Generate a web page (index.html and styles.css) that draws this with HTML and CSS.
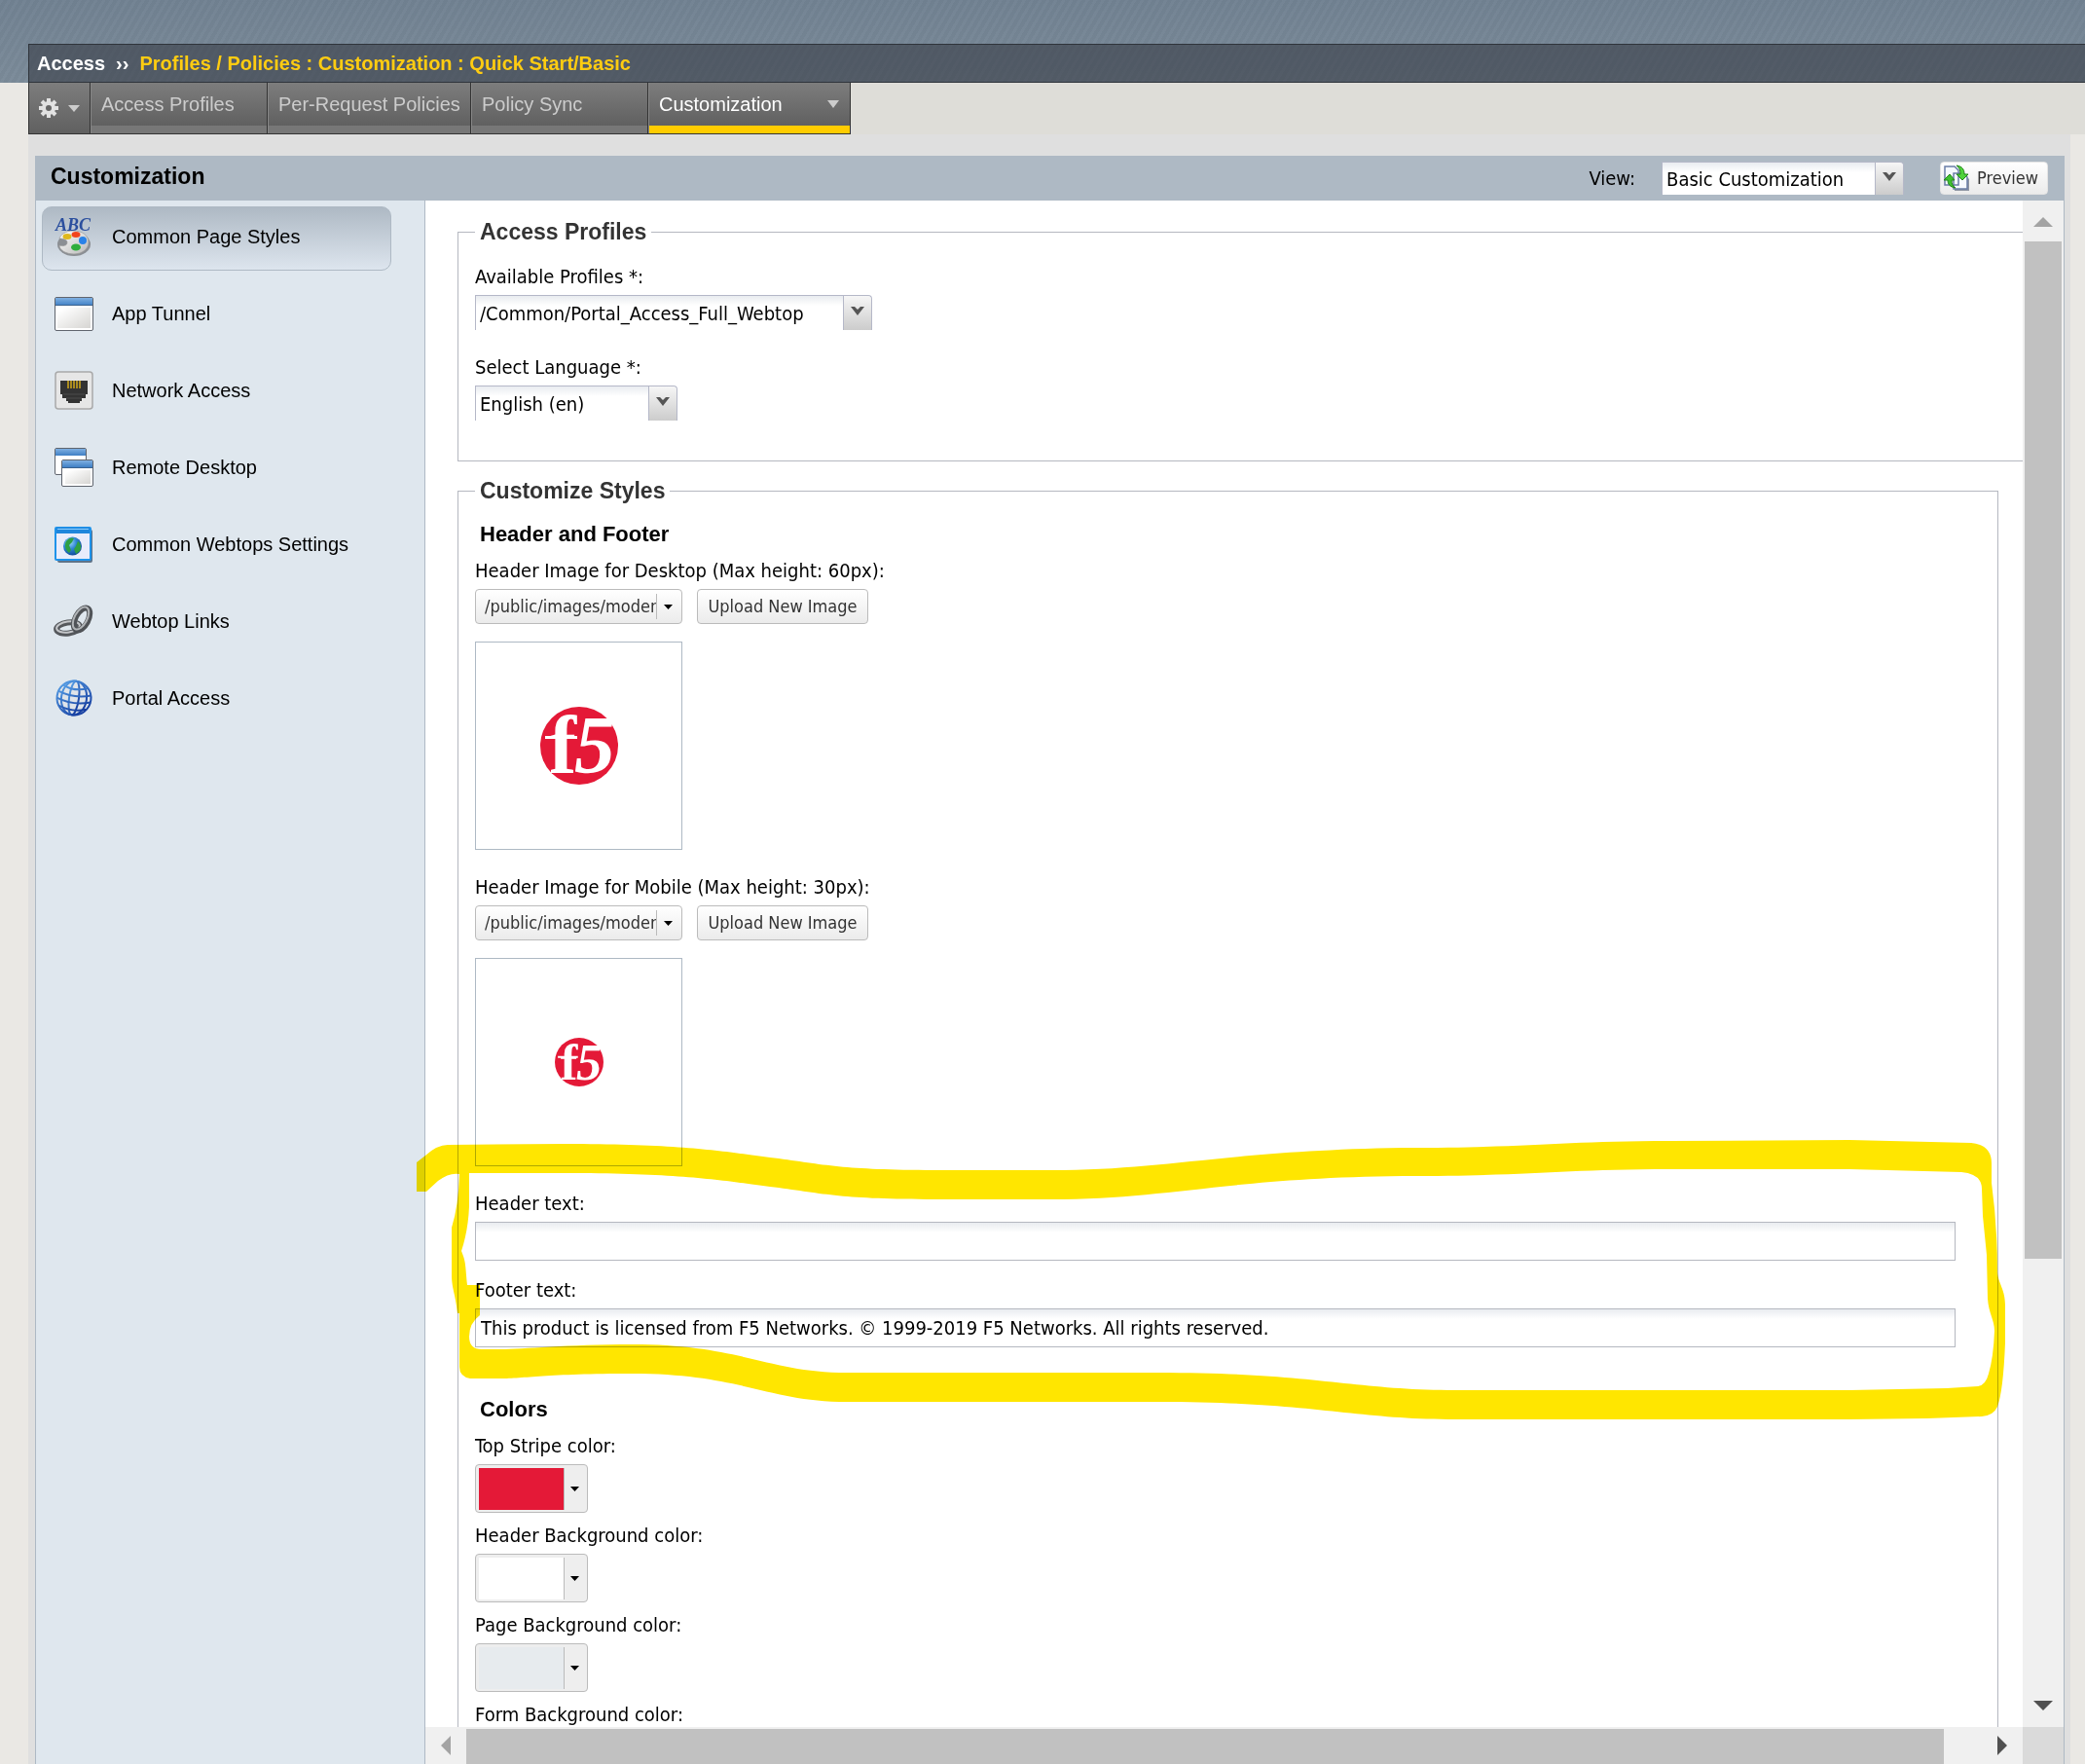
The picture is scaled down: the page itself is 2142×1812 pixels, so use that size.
FILE: index.html
```html
<!DOCTYPE html>
<html lang="en">
<head>
    <meta charset="UTF-8">
    <meta name="viewport" content="width=device-width, initial-scale=1.0">
    <title>Access - Customization</title>
    <link rel="stylesheet" href="styles.css">
</head>
<body>
    <header class="banner">
        <div class="breadcrumb">
            <span>Access</span>
            <span>&rsaquo;&rsaquo;</span>
            <span class="current">Profiles / Policies : Customization : Quick Start/Basic</span>
        </div>
    </header>

    <div class="page">
        <nav class="tabs">
            <button class="gear" type="button" aria-label="Options">
                <svg width="22" height="24" viewBox="0 0 22 24">
                    <g stroke="#e2e2e2" stroke-width="4">
                        <path d="M11 2v20M1 12h20M4 5l14 14M18 5L4 19"/>
                    </g>
                    <circle cx="11" cy="12" r="7" fill="#e2e2e2"/>
                    <circle cx="11" cy="12" r="3" fill="#666"/>
                </svg>
                <svg width="12" height="7" viewBox="0 0 12 7"><path d="M0 0h12L6 7z" fill="#ccc"/></svg>
            </button>
            <a class="tab" href="#">Access Profiles</a>
            <a class="tab wide" href="#">Per-Request Policies</a>
            <a class="tab" href="#">Policy Sync</a>
            <a class="tab wide active" href="#">Customization
                <svg width="12" height="8" viewBox="0 0 12 8"><path d="M0 0h12L6 8z" fill="#ccc"/></svg>
            </a>
        </nav>

        <div class="frame">
            <main class="panel">
                <div class="panel-header">
                    <h1>Customization</h1>
                    <label for="view">View:</label>
                    <span class="combo view">
                        <select id="view"><option>Basic Customization</option></select>
                        <span class="trigger"><svg width="16" height="10" viewBox="0 0 16 10"><path d="M1 0h4l3 3 3-3h4L8 9z" fill="#555"/></svg></span>
                    </span>
                    <button class="preview" type="button">
                        <svg width="28" height="28" viewBox="0 0 28 28">
                            <path d="M12 10h10l5 5v12H12z" fill="#8f96a3"/>
                            <path d="M2 2h10l4 4v15H2zM11 9h10l4 4v12H11z" fill="#f5f9ff" stroke="#6a7da6" stroke-width="1.5"/>
                            <path d="M7 10l5 6H9c0 4 1 6 4 8-6-1-8-4-8-8H1z" fill="#3fc12f" stroke="#23851a"/>
                            <path d="M14 1c6 1 8 4 8 9h4l-6 6-6-6h4c0-4-1-7-4-9z" fill="#4fd33c" stroke="#23851a"/>
                        </svg>
                        Preview
                    </button>
                </div>

                <div class="panel-body">
                    <nav class="sidebar">
                        <a class="item selected" href="#">
                            <svg width="40" height="40" viewBox="0 0 40 40">
                                <defs>
                                    <linearGradient id="palette" x1="0" y1="0" x2="1" y2="1">
                                        <stop offset="0" stop-color="#fff"/>
                                        <stop offset="1" stop-color="#b9b9b9"/>
                                    </linearGradient>
                                </defs>
                                <ellipse cx="20" cy="28" rx="17" ry="12" fill="#8b8f94"/>
                                <path d="M19 14c10 0 16 5 16 12s-7 12-15 12S5 34 5 29c3 1 8 1 8-3 0-3-4-4-8-4 1-4 7-8 14-8z" fill="url(#palette)" stroke="#999" stroke-width=".7"/>
                                <ellipse cx="13" cy="20" rx="4.500" ry="3" fill="#dfb81c"/>
                                <ellipse cx="22" cy="18" rx="4.500" ry="3" fill="#f2441c"/>
                                <ellipse cx="29" cy="24" rx="4" ry="4" fill="#2a82e8"/>
                                <ellipse cx="22" cy="31" rx="5" ry="3.500" fill="#2fae3c"/>
                                <text x="19" y="14" class="abc">ABC</text>
                            </svg>
                            Common Page Styles
                        </a>
                        <a class="item" href="#">
                            <svg width="40" height="40" viewBox="0 0 40 40">
                                <defs>
                                    <linearGradient id="bar" x1="0" y1="0" x2="0" y2="1">
                                        <stop offset="0" stop-color="#7fb0e2"/>
                                        <stop offset="1" stop-color="#3f7fc4"/>
                                    </linearGradient>
                                    <linearGradient id="pane" x1="0" y1="0" x2="1" y2="1">
                                        <stop offset=".1" stop-color="#fff"/>
                                        <stop offset="1" stop-color="#d6d5d2"/>
                                    </linearGradient>
                                </defs>
                                <rect x=".5" y="3.500" width="39" height="34" rx="1.500" fill="#fff" stroke="#60656e"/>
                                <rect x="1" y="4" width="38" height="8" fill="url(#bar)"/>
                                <path d="M1 11.500h38" stroke="#3a628f"/>
                                <rect x="3" y="14" width="34" height="21" fill="url(#pane)"/>
                            </svg>
                            App Tunnel
                        </a>
                        <a class="item" href="#">
                            <svg width="40" height="40" viewBox="0 0 40 40">
                                <rect x="1" y="1" width="38" height="38" rx="3" fill="#e6e6e6" stroke="#a9a9a9" stroke-width="1.500"/>
                                <path d="M6 10h28v14h-2v4h-4v3h-2v2H14v-2h-2v-3H8v-4H6z" fill="#333"/>
                                <path d="M9 24h22M12 28h16" stroke="#4c4c4c" stroke-width="1"/>
                                <path d="M14 10v8M17 10v8M20 10v8M23 10v8M26 10v8" stroke="#c9a21c" stroke-width="1.600"/>
                            </svg>
                            Network Access
                        </a>
                        <a class="item" href="#">
                            <svg width="40" height="40" viewBox="0 0 40 40">
                                <rect x=".5" y=".5" width="32" height="27" rx="1.500" fill="#fff" stroke="#60656e"/>
                                <rect x="1" y="1" width="31" height="7" fill="url(#bar)"/>
                                <rect x="7.500" y="12.500" width="32" height="27" rx="1.500" fill="#fff" stroke="#60656e"/>
                                <rect x="8" y="13" width="31" height="7" fill="url(#bar)"/>
                                <path d="M8 20.500h31" stroke="#3a628f"/>
                                <rect x="11" y="23" width="26" height="14" fill="url(#pane)"/>
                            </svg>
                            Remote Desktop
                        </a>
                        <a class="item" href="#">
                            <svg width="40" height="40" viewBox="0 0 40 40">
                                <defs>
                                    <radialGradient id="earth" cx=".35" cy=".3" r=".8">
                                        <stop offset="0" stop-color="#9fdcff"/>
                                        <stop offset=".45" stop-color="#2f86d2"/>
                                        <stop offset="1" stop-color="#0a3f8f"/>
                                    </radialGradient>
                                </defs>
                                <rect x="3" y="5" width="36" height="34" rx="2" fill="#5f7388"/>
                                <rect x="1" y="3" width="36" height="33" rx="1" fill="#e9ecfb" stroke="#1f93ea" stroke-width="2"/>
                                <rect x="2" y="3" width="34" height="6" fill="#1f86dc"/>
                                <path d="M3 4.500h32" stroke="#8cd0ff"/>
                                <circle cx="18.500" cy="22" r="9.500" fill="url(#earth)"/>
                                <path d="M12 17c3-4 6-4 8-3l-2 4-3 3 2 5-2 3c-4-3-5-8-3-12zM24 17c3 2 4 6 2 10l-4 3-2-5 2-3z" fill="#2fa044"/>
                            </svg>
                            Common Webtops Settings
                        </a>
                        <a class="item" href="#">
                            <svg width="40" height="40" viewBox="0 0 40 40">
                                <g fill="none">
                                    <ellipse cx="14" cy="27" rx="12" ry="5.500" transform="rotate(-8 14 27)" stroke="#55585c" stroke-width="6"/>
                                    <ellipse cx="14" cy="26" rx="12" ry="5.500" transform="rotate(-8 14 26)" stroke="#c4c6c9" stroke-width="2"/>
                                    <ellipse cx="28" cy="18" rx="6.500" ry="12.500" transform="rotate(28 28 18)" stroke="#505357" stroke-width="6"/>
                                    <ellipse cx="27" cy="17" rx="6.500" ry="12.500" transform="rotate(28 27 17)" stroke="#b2b5b8" stroke-width="2"/>
                                </g>
                            </svg>
                            Webtop Links
                        </a>
                        <a class="item" href="#">
                            <svg width="40" height="40" viewBox="0 0 40 40">
                                <defs>
                                    <linearGradient id="wire" x1="0" y1="0" x2="1" y2="1">
                                        <stop offset="0" stop-color="#5aa5ea"/>
                                        <stop offset="1" stop-color="#0b2f96"/>
                                    </linearGradient>
                                </defs>
                                <circle cx="20" cy="20" r="18" fill="#dfe4ea"/>
                                <g fill="none" stroke="url(#wire)" stroke-width="2" transform="rotate(8 20 20)">
                                    <circle cx="20" cy="20" r="17.500"/>
                                    <ellipse cx="20" cy="20" rx="13" ry="17.500"/>
                                    <ellipse cx="20" cy="20" rx="5" ry="17.500"/>
                                    <path d="M7 8q13 6 26 0M3 15q17 6 34 0M2.500 22q17 6 35 0M6 30q14 5 28 0"/>
                                </g>
                            </svg>
                            Portal Access
                        </a>
                    </nav>

                    <div class="content">
                        <fieldset class="profiles">
                            <legend>Access Profiles</legend>
                            <div class="field">
                                <label for="profile">Available Profiles *:</label>
                                <span class="combo profile">
                                    <select id="profile"><option>/Common/Portal_Access_Full_Webtop</option></select>
                                    <span class="trigger"><svg width="16" height="10" viewBox="0 0 16 10"><path d="M1 0h4l3 3 3-3h4L8 9z" fill="#555"/></svg></span>
                                </span>
                            </div>
                            <div class="field">
                                <label for="language">Select Language *:</label>
                                <span class="combo language">
                                    <select id="language"><option>English (en)</option></select>
                                    <span class="trigger"><svg width="16" height="10" viewBox="0 0 16 10"><path d="M1 0h4l3 3 3-3h4L8 9z" fill="#555"/></svg></span>
                                </span>
                            </div>
                        </fieldset>

                        <fieldset class="styles">
                            <legend>Customize Styles</legend>

                            <h2>Header and Footer</h2>
                            <div class="field">
                                <label for="desktop-image">Header Image for Desktop (Max height: 60px):</label>
                                <div class="row">
                                    <span class="picker">
                                        <select id="desktop-image"><option>/public/images/modern</option></select>
                                        <svg width="9" height="5" viewBox="0 0 9 5"><path d="M0 0h9L4.500 5z"/></svg>
                                    </span>
                                    <button class="upload" type="button">Upload New Image</button>
                                </div>
                                <div class="thumb">
                                    <svg width="80" height="80" viewBox="0 0 80 80">
                                        <circle cx="40" cy="40" r="40" fill="#e41937"/>
                                        <g class="logo">
                                            <text x="9" y="68">f</text>
                                            <text x="35" y="68" class="slant">5</text>
                                            <path d="M5 30h33v3H5zM11 65h23v3H11z"/>
                                        </g>
                                    </svg>
                                </div>
                            </div>
                            <div class="field">
                                <label for="mobile-image">Header Image for Mobile (Max height: 30px):</label>
                                <div class="row">
                                    <span class="picker">
                                        <select id="mobile-image"><option>/public/images/modern</option></select>
                                        <svg width="9" height="5" viewBox="0 0 9 5"><path d="M0 0h9L4.500 5z"/></svg>
                                    </span>
                                    <button class="upload" type="button">Upload New Image</button>
                                </div>
                                <div class="thumb">
                                    <svg width="50" height="50" viewBox="0 0 80 80">
                                        <circle cx="40" cy="40" r="40" fill="#e41937"/>
                                        <g class="logo">
                                            <text x="9" y="68">f</text>
                                            <text x="35" y="68" class="slant">5</text>
                                            <path d="M5 30h33v3H5zM11 65h23v3H11z"/>
                                        </g>
                                    </svg>
                                </div>
                            </div>
                            <div class="field text">
                                <label for="header-text">Header text:</label>
                                <input id="header-text" type="text">
                            </div>
                            <div class="field text">
                                <label for="footer-text">Footer text:</label>
                                <input id="footer-text" type="text" value="This product is licensed from F5 Networks. © 1999-2019 F5 Networks. All rights reserved.">
                            </div>

                            <h2 class="colors">Colors</h2>
                            <div class="field color">
                                <label for="top-stripe">Top Stripe color:</label>
                                <button id="top-stripe" class="swatch" type="button">
                                    <span class="red"></span>
                                    <svg width="9" height="5" viewBox="0 0 9 5"><path d="M0 0h9L4.500 5z"/></svg>
                                </button>
                            </div>
                            <div class="field color">
                                <label for="header-bg">Header Background color:</label>
                                <button id="header-bg" class="swatch" type="button">
                                    <span class="white"></span>
                                    <svg width="9" height="5" viewBox="0 0 9 5"><path d="M0 0h9L4.500 5z"/></svg>
                                </button>
                            </div>
                            <div class="field color">
                                <label for="page-bg">Page Background color:</label>
                                <button id="page-bg" class="swatch" type="button">
                                    <span class="gray"></span>
                                    <svg width="9" height="5" viewBox="0 0 9 5"><path d="M0 0h9L4.500 5z"/></svg>
                                </button>
                            </div>
                            <div class="field color">
                                <label for="form-bg">Form Background color:</label>
                                <button id="form-bg" class="swatch" type="button">
                                    <span class="white"></span>
                                    <svg width="9" height="5" viewBox="0 0 9 5"><path d="M0 0h9L4.500 5z"/></svg>
                                </button>
                            </div>
                        </fieldset>
                    </div>

                    <div class="vscroll">
                        <svg width="20" height="10" viewBox="0 0 20 10"><path d="M10 0l10 10H0z" fill="#a3a3a3"/></svg>
                        <div class="track"><div class="handle"></div></div>
                        <svg width="20" height="10" viewBox="0 0 20 10"><path d="M0 0h20L10 10z" fill="#505050"/></svg>
                    </div>
                    <div class="hscroll">
                        <svg width="10" height="20" viewBox="0 0 10 20"><path d="M10 0v20L0 10z" fill="#a3a3a3"/></svg>
                        <div class="track"><div class="handle"></div></div>
                        <svg width="10" height="20" viewBox="0 0 10 20"><path d="M0 0v20l10-10z" fill="#505050"/></svg>
                    </div>
                    <div class="corner"></div>

                    <!-- marker stroke around the header and footer text fields -->
                    <svg class="marker" viewBox="428 1170 1634 292" preserveAspectRatio="none">
                        <path fill="#ffe600" fill-rule="evenodd" d="
                            M428 1195L437 1188Q449 1177 460 1177L580 1176C720 1176 760 1187 800 1191C850 1198 870 1203 970 1203
                            L1079 1203C1200 1203 1260 1183 1441 1180C1580 1180 1600 1173 1716 1173L1900 1172L2025 1175
                            Q2046 1177 2046 1196L2046 1216Q2052 1260 2052 1308C2053 1320 2060 1325 2060 1342L2060 1380
                            Q2058 1430 2052 1446Q2048 1455 2036 1456L1980 1458L1900 1459L1496 1459C1390 1459 1350 1441 1189 1441
                            L870 1441C790 1441 760 1412 650 1412C560 1412 540 1417 513 1417L483 1417Q472 1415 472 1405L472 1350L470 1350
                            C468 1330 464 1325 464 1310L464 1262Q471 1240 472 1207Q462 1205 450 1214L438 1225L428 1225Z
                            M482 1206L580 1206C720 1206 760 1217 800 1221C850 1228 870 1233 970 1233L1079 1233
                            C1200 1233 1260 1211 1441 1209C1580 1209 1600 1202 1716 1202L1900 1202L2015 1205Q2036 1207 2036 1222
                            L2037 1250L2041 1290L2042 1335C2043 1350 2049 1357 2049 1368Q2048 1395 2043 1412Q2040 1424 2032 1425
                            L2000 1427L1900 1429L1496 1429C1390 1429 1350 1411 1189 1411L870 1411C790 1411 760 1382 650 1382
                            C580 1382 540 1387 513 1387L495 1387Q482 1387 482 1374Q482 1360 493 1352L493 1321L480 1321
                            C478 1302 479 1298 474 1286Q481 1265 482 1240Z"/>
                    </svg>
                </div>
            </main>
        </div>
    </div>
</body>
</html>
```
FILE: styles.css
```css
* {
    box-sizing: border-box;
}
body {
    margin: 0;
    height: 100vh;
    display: flex;
    flex-direction: column;
    overflow: hidden;
    background-color: #eae8e4;
    color: #000;
    font-family: "DejaVu Sans Condensed", "DejaVu Sans", sans-serif;
    font-size: 20px;
    line-height: 24px;
}
svg {
    display: block;
    flex: none;
    overflow: visible;
}
button, select, input {
    margin: 0;
    font: inherit;
    color: inherit;
}
select {
    appearance: none;
    border: none;
    outline: none;
    background: none;
}

/* top banner */
.banner {
    padding: 45px 0 0 29px;
    background: repeating-linear-gradient(120deg, rgba(255, 255, 255, .02) 0 3px, rgba(0, 0, 0, .02) 3px 7px),
        linear-gradient(#718292, #7b8b99);
}
.breadcrumb {
    display: flex;
    align-items: center;
    gap: 11px;
    height: 40px;
    padding-left: 8px;
    border: 1px solid #2f343b;
    border-right: none;
    background-color: rgba(50, 52, 62, .55);
    color: #fff;
    font: bold 20px/24px "Liberation Sans", Arial, sans-serif;
}
.breadcrumb .current {
    color: #fc1;
}
.page {
    flex: 1;
    min-height: 0;
    display: flex;
    flex-direction: column;
    padding-left: 29px;
}

/* tabs */
.tabs {
    display: flex;
    height: 53px;
    background-color: #deddd8;
    font: 20px/24px "Liberation Sans", Arial, sans-serif;
}
.gear, .tab {
    border: solid #333;
    border-width: 0 0 1px 1px;
    background: linear-gradient(#7d7d7d, #606060);
}
.gear {
    width: 63px;
    display: flex;
    align-items: center;
    gap: 9px;
    padding: 0 9px;
}
.tab {
    display: flex;
    justify-content: space-between;
    align-items: center;
    width: 182px;
    padding: 0 11px 8px;
    box-shadow: inset 1px 0 #888;
    color: #ccc;
    text-decoration: none;
    white-space: nowrap;
    background: linear-gradient(#7d7d7d, #606060 44px, #777 44px);
}
.tab.wide {
    width: 209px;
}
.tab.active {
    border-right: 1px solid #333;
    background: linear-gradient(#7d7d7d, #606060 44px, #fc0 44px);
    color: #fff;
}

/* panel */
.frame {
    flex: 1;
    min-height: 0;
    display: flex;
    margin-right: 15px;
    padding: 22px 6px 0 7px;
    background-color: #dfdfdf;
}
.panel {
    flex: 1;
    min-width: 0;
    display: flex;
    flex-direction: column;
    border: solid #aeb9c4;
    border-width: 0 1px;
}
.panel-header {
    display: flex;
    align-items: center;
    height: 46px;
    padding: 0 16px 0 15px;
    background-color: #aeb9c4;
}
h1 {
    flex: 1;
    margin: 0;
    padding-bottom: 4px;
    font: bold 23px/24px "Liberation Sans", Arial, sans-serif;
}
.combo {
    display: flex;
    height: 36px;
    border: 1px solid #b5b8c8;
    border-bottom: none;
    border-top-right-radius: 4px;
    background: linear-gradient(#e9ecf0, #fff 10px);
}
.combo select {
    flex: 1;
    min-width: 0;
    padding: 0 4px;
}
.trigger {
    width: 29px;
    display: flex;
    align-items: center;
    justify-content: center;
    padding-bottom: 3px;
    border-left: 1px solid #b5b8c8;
    border-top-right-radius: 4px;
    background: linear-gradient(#f6f6f6, #ccc);
}
.combo.view {
    width: 249px;
    height: 34px;
    margin: 0 37px 0 27px;
}
.combo.profile {
    width: 408px;
}
.combo.language {
    width: 208px;
}
.preview, .upload, .picker {
    border: 1px solid #bbb;
    border-radius: 4px;
    background: linear-gradient(#fff, #ebebeb);
    color: #333;
    font-size: 18px;
}
.preview {
    display: flex;
    align-items: center;
    gap: 7px;
    height: 34px;
    padding: 0 9px 0 2px;
    border-color: #e4e4e4;
}
.panel-body {
    position: relative;
    flex: 1;
    min-height: 0;
    display: grid;
    grid-template-columns: 400px 1fr 42px;
    grid-template-rows: 1fr 38px;
    background-color: #fff;
}

/* sidebar */
.sidebar {
    grid-row: 1 / 3;
    display: flex;
    flex-direction: column;
    gap: 13px;
    padding: 6px 34px 0 6px;
    border-right: 1px solid #aeb9c4;
    background-color: #dfe7ee;
    font: 20px/24px "Liberation Sans", Arial, sans-serif;
}
.item {
    display: flex;
    align-items: center;
    gap: 19px;
    height: 66px;
    padding: 0 12px 4px;
    border: 1px solid transparent;
    border-radius: 10px;
    color: #000;
    text-decoration: none;
}
.item.selected {
    border-color: #aeb9c4;
    background: linear-gradient(#aeb9c4, #dde5ee);
}
.abc {
    font: italic bold 18px "Liberation Serif", serif;
    fill: #2b4f9e;
    text-anchor: middle;
}

/* form */
.content {
    min-width: 0;
    overflow: hidden;
    padding: 18px 0 0 33px;
}
fieldset {
    min-width: 0;
    margin: 0 0 16px;
    padding: 19px 43px 15px 17px;
    border: 1px solid #b5b8c0;
}
.profiles {
    padding-top: 20px;
    border-right: none;
}
.styles {
    margin-right: 25px;
}
legend {
    padding: 0 5px;
    color: #333;
    font: bold 23px/28px "Liberation Sans", Arial, sans-serif;
}
h2 {
    margin: 0 0 13px 5px;
    font: bold 22px/24px "Liberation Sans", Arial, sans-serif;
}
h2.colors {
    margin-top: 52px;
}
.field {
    margin-bottom: 26px;
}
.field label {
    display: block;
    margin-bottom: 7px;
}
.field.text {
    margin-bottom: 18px;
}
.field.color {
    margin-bottom: 11px;
}
.row {
    display: flex;
    gap: 15px;
}
.picker {
    display: flex;
    align-items: center;
    width: 213px;
    height: 36px;
    padding: 0 9px;
}
.picker select {
    flex: 1;
    min-width: 0;
    height: 26px;
    margin-right: 7px;
    padding: 0;
    border-right: 1px solid #bbb;
    text-overflow: clip;
}
.upload {
    width: 176px;
    height: 36px;
    padding: 0;
    white-space: nowrap;
}
.thumb {
    display: flex;
    align-items: center;
    justify-content: center;
    width: 213px;
    height: 214px;
    margin-top: 18px;
    border: 1px solid #aeb9c4;
}
.logo {
    fill: #fff;
    font: bold 84px "Liberation Serif", serif;
}
.logo .slant {
    font-style: italic;
}
input {
    display: block;
    width: 100%;
    height: 40px;
    padding: 0 5px;
    border: 1px solid #b5b8c0;
    background: linear-gradient(#e9ecf0, #fff 10px);
}
.swatch {
    display: flex;
    align-items: center;
    gap: 6px;
    width: 116px;
    height: 50px;
    padding: 3px;
    border: 1px solid #bbb;
    border-radius: 4px;
    background-color: #eee;
}
.swatch span {
    width: 88px;
    height: 43px;
    border-right: 1px solid #bbb;
}
.red {
    background-color: #e41937;
}
.white {
    background-color: #fff;
}
.gray {
    background-color: #e7ebee;
}

/* scrollbars */
.vscroll, .hscroll {
    display: flex;
    align-items: center;
    background-color: #f0f0f0;
}
.vscroll {
    flex-direction: column;
    padding: 17px 0;
}
.hscroll {
    grid-column: 2;
    padding: 0 16px;
}
.track {
    flex: 1;
}
.vscroll .track {
    width: 38px;
    padding: 15px 0 17px;
}
.vscroll .handle {
    height: 70.5%;
    background-color: #c1c1c1;
}
.hscroll .track {
    align-self: stretch;
    padding: 2px 16px 0;
}
.hscroll .handle {
    width: 97.5%;
    height: 100%;
    background-color: #c1c1c1;
}
.corner {
    background-color: #dadada;
}
.marker {
    position: absolute;
    left: 391px;
    top: 963px;
    width: calc(100% - 449px);
    height: 292px;
    mix-blend-mode: multiply;
    pointer-events: none;
}
```
